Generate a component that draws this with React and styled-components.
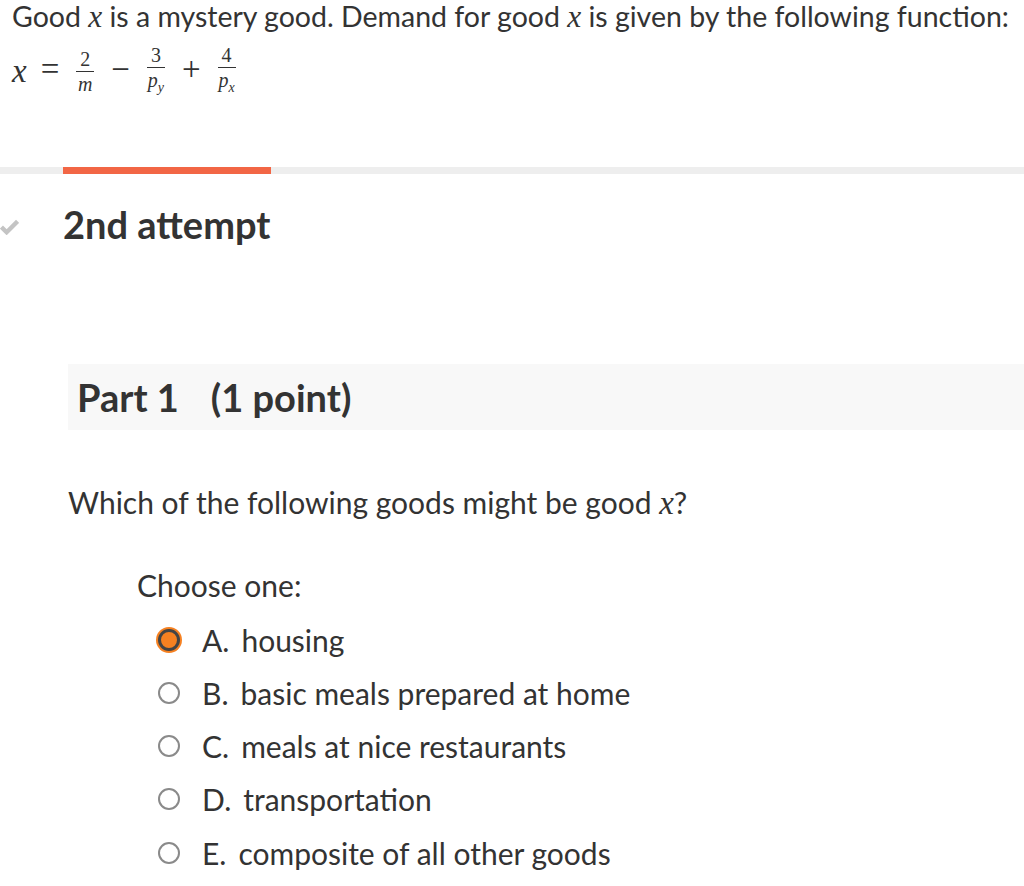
import React from "react";
import styled, { createGlobalStyle } from "styled-components";

const GlobalStyle = createGlobalStyle`
  body {
    margin: 0;
    background: #ffffff;
    font-family: Lato, "Liberation Sans", sans-serif;
    color: #333333;
  }
`;

const options = [
  { key: "A.", text: "housing", checked: true },
  { key: "B.", text: "basic meals prepared at home" },
  { key: "C.", text: "meals at nice restaurants" },
  { key: "D.", text: "transportation" },
  { key: "E.", text: "composite of all other goods" },
];

function App() {
  return (
    <Page>
      <GlobalStyle />
      <Intro>
        Good <Var>x</Var> is a mystery good. Demand for good <Var>x</Var> is
        given by the following function:
      </Intro>
      <Formula>
        <Var>x</Var>
        <Op>=</Op>
        <Frac>
          <Num>2</Num>
          <Den><i>m</i></Den>
        </Frac>
        <Op>−</Op>
        <Frac>
          <Num>3</Num>
          <Den><i>p</i><Sub>y</Sub></Den>
        </Frac>
        <Op>+</Op>
        <Frac>
          <Num>4</Num>
          <Den><i>p</i><Sub>x</Sub></Den>
        </Frac>
      </Formula>

      <Track>
        <Fill />
      </Track>

      <AttemptRow>
        <Check viewBox="0 0 20 16">
          <path d="M1.5 8 L7 13.5 L18.5 2" fill="none" stroke="#c4c4c4" strokeWidth="4.6" />
        </Check>
        <AttemptTitle>2nd attempt</AttemptTitle>
      </AttemptRow>

      <PartBox>
        <PartTitle>
          Part 1<Points>(1 point)</Points>
        </PartTitle>
      </PartBox>

      <Question>
        Which of the following goods might be good <Var>x</Var>?
      </Question>

      <Choices>
        <ChooseLabel>Choose one:</ChooseLabel>
        {options.map((o) => (
          <Option key={o.key}>
            <Radio $checked={o.checked} />
            <OptKey>{o.key}</OptKey>
            <span>{o.text}</span>
          </Option>
        ))}
      </Choices>
    </Page>
  );
}

const Page = styled.div`
  width: 1024px;
  height: 886px;
  overflow: hidden;
`;

const Intro = styled.div`
  padding-left: 12px;
  font-size: 28.5px;
  line-height: 32px;
  white-space: nowrap;
`;

const Var = styled.i`
  font-family: "Liberation Serif", serif;
  font-size: 1.1em;
`;

const Formula = styled.div`
  display: flex;
  align-items: center;
  padding-left: 12px;
  margin-top: 10px;
  height: 56px;
  font-family: "Liberation Serif", serif;
  font-size: 30px;
  color: #333333;
`;

const Op = styled.span`
  margin: 0 14px;
  font-size: 33px;
  transform: translateY(-2px);
`;

const Frac = styled.span`
  display: inline-flex;
  flex-direction: column;
  align-items: center;
  font-size: 20px;
  line-height: 22px;
  padding: 0 3px;
`;

const Num = styled.span`
  border-bottom: 1.5px solid #333333;
  padding: 0 4px 1px;
  align-self: stretch;
  text-align: center;
`;

const Den = styled.span`
  padding-top: 1px;
  font-style: normal;
`;

const Sub = styled.i`
  font-size: 14px;
  vertical-align: -5px;
`;

const Track = styled.div`
  margin-top: 68px;
  height: 7px;
  background: #eeeeee;
`;

const Fill = styled.div`
  margin-left: 63px;
  width: 208px;
  height: 100%;
  background: #f26645;
`;

const AttemptRow = styled.div`
  display: flex;
  align-items: center;
  margin-top: 29px;
  height: 42px;
`;

const Check = styled.svg`
  width: 19px;
  height: 16px;
  margin-right: 44px;
  margin-top: 6px;
`;

const AttemptTitle = styled.h2`
  margin: 0;
  font-size: 38px;
  font-weight: 700;
  color: #333333;
`;

const PartBox = styled.div`
  margin: 119px 0 0 68px;
  height: 66px;
  background: #f8f8f8;
  display: flex;
  align-items: center;
  padding-left: 9px;
`;

const PartTitle = styled.h3`
  margin: 0;
  font-size: 38px;
  font-weight: 700;
  color: #333333;
`;

const Points = styled.span`
  margin-left: 32px;
`;

const Question = styled.p`
  margin: 53px 0 0 68px;
  font-size: 30px;
  line-height: 38px;
`;

const Choices = styled.div`
  margin: 43px 0 0 137px;
`;

const ChooseLabel = styled.div`
  font-size: 30px;
  line-height: 40px;
  margin-bottom: 8px;
`;

const Option = styled.div`
  display: flex;
  align-items: center;
  height: 53.25px;
  margin-left: 21px;
  font-size: 30px;
`;

const Radio = styled.span`
  box-sizing: border-box;
  width: 22px;
  height: 22px;
  border-radius: 50%;
  margin-right: 22px;
  border: ${(p) => (p.$checked ? "3px solid #444444" : "2px solid #8a8a8a")};
  background: ${(p) => (p.$checked ? "#f68121" : "#ffffff")};
  box-shadow: ${(p) => (p.$checked ? "0 0 0 2px #f68121" : "none")};
`;

const OptKey = styled.span`
  margin-right: 12px;
`;

export default App;
